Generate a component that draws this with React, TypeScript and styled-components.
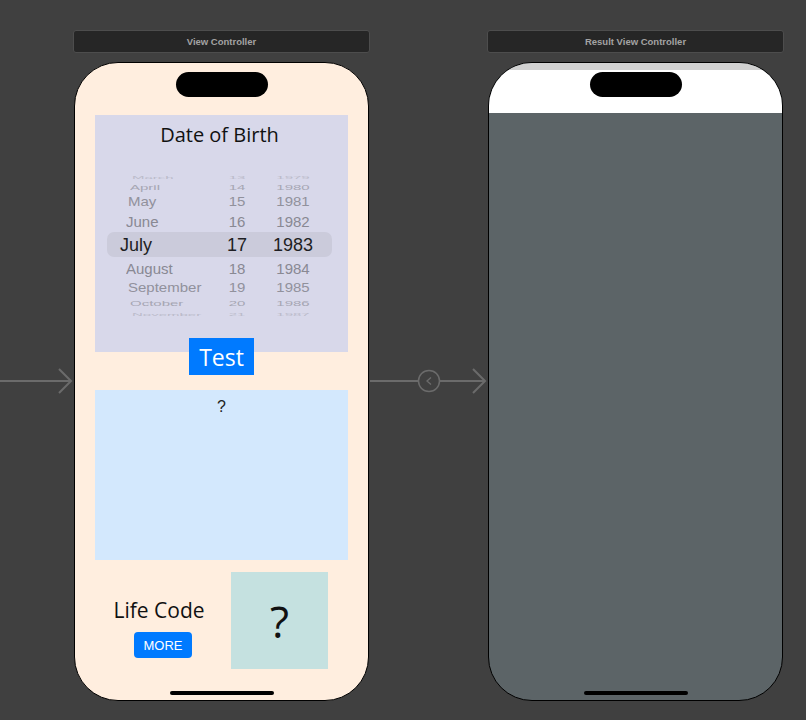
import styled, { createGlobalStyle } from "styled-components";

const GlobalStyle = createGlobalStyle`
  html, body {
    margin: 0;
    padding: 0;
    background-color: #404040;
    font-family: "Liberation Sans", Arial, sans-serif;
  }
  * {
    box-sizing: border-box;
  }
`;

interface wheelRow {
  month: string;
  day: string;
  year: string;
  height: number;
  scale: number;
  fade: number;
  indent: number;
  selected?: boolean;
}

const rows: wheelRow[] = [
  { month: "March", day: "13", year: "1979", height: 10, scale: 0.2, fade: 0.35, indent: 25 },
  { month: "April", day: "14", year: "1980", height: 12, scale: 0.5, fade: 0.6, indent: 23 },
  { month: "May", day: "15", year: "1981", height: 18, scale: 0.8, fade: 0.85, indent: 21 },
  { month: "June", day: "16", year: "1982", height: 22, scale: 0.95, fade: 0.95, indent: 19 },
  { month: "July", day: "17", year: "1983", height: 25, scale: 1, fade: 1, indent: 13, selected: true },
  { month: "August", day: "18", year: "1984", height: 22, scale: 0.95, fade: 0.95, indent: 19 },
  { month: "September", day: "19", year: "1985", height: 17, scale: 0.8, fade: 0.85, indent: 21 },
  { month: "October", day: "20", year: "1986", height: 11, scale: 0.5, fade: 0.6, indent: 23 },
  { month: "November", day: "21", year: "1987", height: 6, scale: 0.2, fade: 0.35, indent: 25 },
];

function EntryArrow() {
  return (
    <ArrowBox width={73}>
      <svg width="73" height="30" viewBox="0 0 73 30">
        <line x1="0" y1="15" x2="71" y2="15" stroke="#6b6b6b" strokeWidth="2" />
        <polyline points="59,3 71,15 59,27" fill="none" stroke="#6b6b6b" strokeWidth="2" />
      </svg>
    </ArrowBox>
  );
}

function SegueArrow() {
  return (
    <ArrowBox width={117}>
      <svg width="117" height="30" viewBox="0 0 117 30">
        <line x1="0" y1="15" x2="48" y2="15" stroke="#6b6b6b" strokeWidth="2" />
        <circle cx="59" cy="15" r="10.5" fill="none" stroke="#6b6b6b" strokeWidth="1.5" />
        <polyline points="61,11.5 57,15 61,18.5" fill="none" stroke="#6b6b6b" strokeWidth="1.3" />
        <line x1="69.5" y1="15" x2="115" y2="15" stroke="#6b6b6b" strokeWidth="2" />
        <polyline points="103,3 115,15 103,27" fill="none" stroke="#6b6b6b" strokeWidth="2" />
      </svg>
    </ArrowBox>
  );
}

function DatePicker() {
  return (
    <PickerCard>
      <PickerTitle>Date of Birth</PickerTitle>
      <Wheel>
        {rows.map((r) => (
          <WheelRow key={r.month} $height={r.height} $selected={r.selected}>
            <MonthCell $indent={r.indent}>
              <WheelText $scale={r.scale} $fade={r.fade} $selected={r.selected}>
                {r.month}
              </WheelText>
            </MonthCell>
            <NumberCell>
              <WheelText $scale={r.scale} $fade={r.fade} $selected={r.selected}>
                {r.day}
              </WheelText>
            </NumberCell>
            <NumberCell>
              <WheelText $scale={r.scale} $fade={r.fade} $selected={r.selected}>
                {r.year}
              </WheelText>
            </NumberCell>
          </WheelRow>
        ))}
      </Wheel>
    </PickerCard>
  );
}

export default function App() {
  return (
    <>
      <GlobalStyle />
      <Canvas>
        <EntryArrow />

        <Scene>
          <SceneTitle>View Controller</SceneTitle>
          <Phone $bg="#ffeedf">
            <Island />
            <PhoneContent>
              <DatePicker />
              <TestButton>Test</TestButton>
              <ResultPanel>?</ResultPanel>
              <BottomRow>
                <LifeCodeBlock>
                  <LifeCodeLabel>Life Code</LifeCodeLabel>
                  <MoreButton>MORE</MoreButton>
                </LifeCodeBlock>
                <CodeTile>?</CodeTile>
              </BottomRow>
            </PhoneContent>
            <HomeIndicator />
          </Phone>
        </Scene>

        <SegueArrow />

        <Scene>
          <SceneTitle>Result View Controller</SceneTitle>
          <Phone $bg="#5c6467">
            <Island />
            <TopStrip />
            <NavHeader />
            <HomeIndicator />
          </Phone>
        </Scene>
      </Canvas>
    </>
  );
}

const Canvas = styled.div`
  width: 806px;
  height: 720px;
  overflow: hidden;
  display: flex;
  align-items: flex-start;
`;

const ArrowBox = styled.div<{ width: number }>`
  width: ${({ width }) => width}px;
  flex-shrink: 0;
  margin-top: 366px;
  height: 30px;

  svg {
    display: block;
  }
`;

const Scene = styled.div`
  width: 297px;
  flex-shrink: 0;
  margin-top: 30px;
  display: flex;
  flex-direction: column;
  align-items: center;
  gap: 9px;
`;

const SceneTitle = styled.div`
  width: 100%;
  height: 23px;
  background-color: #262626;
  border: 1px solid #4d4d4d;
  border-radius: 3px;
  color: #a3a3a3;
  font-size: 9.5px;
  font-weight: bold;
  display: flex;
  align-items: center;
  justify-content: center;
`;

const Phone = styled.div<{ $bg: string }>`
  position: relative;
  width: 295px;
  height: 639px;
  border: 1px solid #000;
  border-radius: 44px;
  background-color: ${({ $bg }) => $bg};
  overflow: hidden;
  display: flex;
  flex-direction: column;
`;

const Island = styled.div`
  position: absolute;
  top: 9px;
  left: 50%;
  transform: translateX(-50%);
  width: 92px;
  height: 25px;
  border-radius: 13px;
  background-color: #000;
  z-index: 2;
`;

const HomeIndicator = styled.div`
  position: absolute;
  bottom: 5px;
  left: 50%;
  transform: translateX(-50%);
  width: 104px;
  height: 4px;
  border-radius: 2px;
  background-color: #000;
`;

const TopStrip = styled.div`
  height: 7px;
  background-color: #d1d1d1;
`;

const NavHeader = styled.div`
  height: 43px;
  background-color: #fff;
`;

const PhoneContent = styled.div`
  display: flex;
  flex-direction: column;
  align-items: center;
  padding: 52px 20px 0 20px;
`;

const PickerCard = styled.div`
  width: 253px;
  height: 237px;
  background-color: #d8d8ea;
  display: flex;
  flex-direction: column;
  padding-top: 6px;
`;

const PickerTitle = styled.div`
  font-family: "Open Sans", sans-serif;
  font-size: 20px;
  line-height: 27px;
  color: #111;
  text-align: center;
  margin-right: 4px;
`;

const Wheel = styled.div`
  margin-top: 22px;
  display: flex;
  flex-direction: column;
`;

const WheelRow = styled.div<{ $height: number; $selected?: boolean }>`
  height: ${({ $height }) => $height}px;
  margin: 0 16px 0 12px;
  display: grid;
  grid-template-columns: 104px 40px 60px;
  column-gap: 6px;
  border-radius: 7px;
  background-color: ${({ $selected }) => ($selected ? "#cbcbdb" : "transparent")};
`;

const MonthCell = styled.div<{ $indent: number }>`
  display: flex;
  align-items: center;
  padding-left: ${({ $indent }) => $indent}px;
  white-space: nowrap;
`;

const NumberCell = styled.div`
  display: flex;
  align-items: center;
  justify-content: center;
`;

const WheelText = styled.span<{ $scale: number; $fade: number; $selected?: boolean }>`
  display: block;
  font-size: ${({ $selected }) => ($selected ? 18 : 15)}px;
  line-height: 1;
  color: ${({ $selected }) => ($selected ? "#1e1e23" : "#85858f")};
  opacity: ${({ $fade }) => $fade};
  transform: scaleY(${({ $scale }) => $scale});
`;

const TestButton = styled.div`
  position: relative;
  z-index: 1;
  margin-top: -14px;
  width: 65px;
  height: 37px;
  background-color: #007aff;
  color: #fff;
  font-family: "Open Sans", sans-serif;
  font-size: 23px;
  display: flex;
  align-items: center;
  justify-content: center;
`;

const ResultPanel = styled.div`
  margin-top: 15px;
  width: 253px;
  height: 170px;
  background-color: #d3e8fd;
  color: #222;
  font-size: 16px;
  text-align: center;
  padding-top: 8px;
`;

const BottomRow = styled.div`
  margin-top: 12px;
  width: 253px;
  display: flex;
  align-items: flex-start;
`;

const LifeCodeBlock = styled.div`
  width: 136px;
  margin-top: 24px;
  display: flex;
  flex-direction: column;
  align-items: center;
  gap: 8px;
`;

const LifeCodeLabel = styled.div`
  font-family: "Open Sans", sans-serif;
  font-size: 21px;
  line-height: 28px;
  color: #111;
  margin-right: 8px;
`;

const MoreButton = styled.div`
  width: 58px;
  height: 26px;
  border-radius: 4px;
  background-color: #007aff;
  color: #fff;
  font-size: 13px;
  display: flex;
  align-items: center;
  justify-content: center;
`;

const CodeTile = styled.div`
  width: 97px;
  height: 97px;
  background-color: #c5e1e0;
  color: #111;
  font-family: "Open Sans", sans-serif;
  font-size: 44px;
  display: flex;
  align-items: center;
  justify-content: center;
`;
